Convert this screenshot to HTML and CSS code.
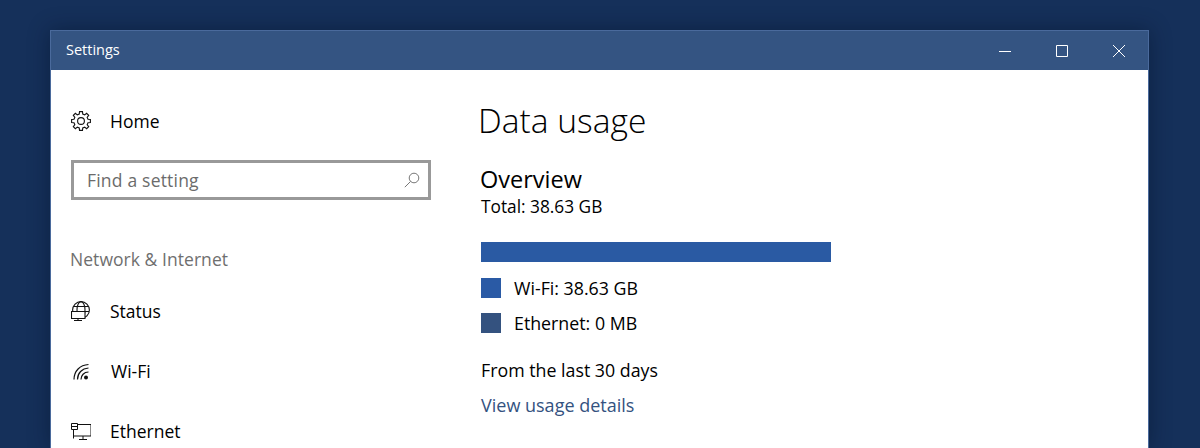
FILE: index.html
```html
<!DOCTYPE html>
<html>
<head>
<meta charset="utf-8">
<meta name="viewport" content="width=device-width, initial-scale=1.0">
<title>Settings</title>
<link rel="stylesheet" href="styles.css">
</head>
<body>
  <div class="window">
    <div class="titlebar">
      <span class="title">Settings</span>
      <div class="controls">
        <svg class="ctl ctl-min" width="14" height="14" viewBox="0 0 14 14"><path d="M1 7.500h12" stroke="#fff" fill="none"/></svg>
        <svg class="ctl ctl-max" width="14" height="14" viewBox="0 0 14 14"><path d="M1.500 1.500h11v11h-11z" stroke="#fff" fill="none"/></svg>
        <svg class="ctl ctl-close" width="14" height="14" viewBox="0 0 14 14"><path d="M1 1l12 12M13 1L1 13" stroke="#fff" fill="none"/></svg>
      </div>
    </div>

    <div class="content">
      <div class="sidebar">
        <div class="nav-row home">
          <svg class="nav-icon" width="20" height="20" viewBox="0 0 20 20"><polygon points="8.26,3.01 8.51,.62 11.49,.62 11.74,3.01 13.71,3.83 15.59,2.31 17.69,4.41 16.17,6.29 16.99,8.26 19.38,8.51 19.38,11.49 16.99,11.74 16.17,13.71 17.69,15.59 15.59,17.69 13.71,16.17 11.74,16.99 11.49,19.38 8.51,19.38 8.26,16.99 6.29,16.17 4.41,17.69 2.31,15.59 3.83,13.71 3.01,11.74 .62,11.49 .62,8.51 3.01,8.26 3.83,6.29 2.31,4.41 4.41,2.31 6.29,3.83" fill="none" stroke="#111" stroke-width="1.100"/><circle cx="10" cy="10" r="3.400" fill="none" stroke="#111" stroke-width="1.100"/></svg>
          <span>Home</span>
        </div>
        <div class="search">
          <span class="search-text">Find a setting</span>
          <svg width="16" height="16" viewBox="0 0 16 16"><circle cx="10" cy="6" r="4.800" fill="none" stroke="#777"/><path d="M6.600 9.400L.8 15.200" stroke="#777" fill="none"/></svg>
        </div>
        <div class="nav-heading">Network &amp; Internet</div>
        <div class="nav-row">
          <svg class="nav-icon" width="20" height="20" viewBox="0 0 20 20"><g fill="none" stroke="#111" stroke-width="1.100"><circle cx="10" cy="9" r="8.400"/><ellipse cx="10" cy="9" rx="4" ry="8.400"/><path d="M2.500 5.500h15M14 10.500h4"/><path d="M.5 10.500h13.500v7H.5z" fill="#fff"/><path d="M7 17.500v2.500M3 19.500h8"/></g></svg>
          <span>Status</span>
        </div>
        <div class="nav-row">
          <svg class="nav-icon" width="20" height="20" viewBox="0 0 20 20"><g fill="none" stroke="#111" stroke-width="1.200"><path d="M3 18.500C3 10 9 4 17.500 3.500"/><path d="M6.500 18.500C6.500 12 11 7.500 17.500 7"/><path d="M10 18.500c0-4 3-7.500 7.500-7.500"/></g><circle cx="15" cy="16.500" r="2" fill="#111"/></svg>
          <span class="wifi-label">Wi-Fi</span>
        </div>
        <div class="nav-row">
          <svg class="nav-icon" width="20" height="20" viewBox="0 0 20 20"><g fill="none" stroke="#111"><path d="M6 3.500h14v11.500H2.500"/><path d="M.5 2.500h6v6h-6z"/><path d="M2.500 8.500v9M12 15v3.500M8 18.500h8"/><path d="M1 5.500h5"/></g></svg>
          <span>Ethernet</span>
        </div>
      </div>

      <div class="main">
        <h1>Data usage</h1>
        <h2>Overview</h2>
        <div class="total">Total: 38.63 GB</div>
        <div class="bar"></div>
        <div class="legend">
          <div class="legend-row"><span class="swatch swatch-wifi"></span>Wi-Fi: 38.63 GB</div>
          <div class="legend-row"><span class="swatch swatch-eth"></span>Ethernet: 0 MB</div>
        </div>
        <div class="period">From the last 30 days</div>
        <a class="details" href="#">View usage details</a>
      </div>
    </div>
  </div>
</body>
</html>
```

FILE: styles.css
```css
html, body {
  height: 100%;
  margin: 0;
  padding: 0;
  overflow: hidden;
}

body {
  background: #15305a;
  font-family: "Open Sans", "Noto Sans", sans-serif;
  color: #000;
}

.window {
  width: 1097px;
  height: 417px;
  margin: 30px 0 0 50px;
  border: 1px solid #4a6a9c;
  border-bottom: none;
  background: #fff;
  box-shadow: 0 0 20px rgba(5, 15, 35, 0.45);
  overflow: hidden;
}

.titlebar {
  display: flex;
  align-items: center;
  justify-content: space-between;
  height: 39px;
  background: #345482;
  color: #fff;
}

.title {
  margin: 0 0 2px 15px;
  font-size: 14.500px;
}

.controls {
  display: flex;
  align-items: center;
}

.ctl {
  display: block;
}

.ctl-min {
  margin-right: 43px;
}

.ctl-max {
  margin-right: 43px;
}

.ctl-close {
  margin-right: 22px;
}

.content {
  display: flex;
}

.sidebar {
  width: 360px;
  padding: 31px 0 0 20px;
  font-size: 17.500px;
}

.nav-row {
  display: flex;
  align-items: center;
  height: 60px;
}

.nav-row.home {
  height: 40px;
}

.nav-icon {
  flex: none;
  margin-right: 19px;
}

.wifi-label {
  margin-left: 1px;
}

.search {
  display: flex;
  align-items: center;
  justify-content: space-between;
  box-sizing: border-box;
  height: 40px;
  margin-top: 19px;
  padding: 0 8px 0 13px;
  border: 3px solid #999;
  color: #6b6b6b;
}

.search-text {
  letter-spacing: 0.2px;
}

.nav-heading {
  height: 37px;
  margin: 44px 0 0 -1px;
  letter-spacing: 0.05px;
  line-height: 30px;
  color: #6f6f6f;
}

.main {
  margin-left: 50px;
  padding-top: 30px;
}

h1 {
  margin: 0 0 0 -3px;
  font-size: 33.600px;
  font-weight: 300;
  line-height: 40px;
}

h2 {
  margin: 22px 0 0 -1px;
  font-size: 23.500px;
  font-weight: 400;
  line-height: 34px;
}

.total {
  font-size: 17.300px;
  line-height: 22px;
}

.bar {
  width: 350px;
  height: 20px;
  margin-top: 24px;
  background: #2a5aa3;
}

.legend {
  display: flex;
  flex-direction: column;
  gap: 15px;
  margin-top: 16px;
}

.legend-row {
  display: flex;
  align-items: center;
  height: 20px;
  font-size: 17.800px;
}

.swatch {
  width: 20px;
  height: 20px;
  margin-right: 13px;
}

.swatch-wifi {
  background: #2a5aa5;
}

.swatch-eth {
  background: #34527f;
}

.period {
  margin-top: 26px;
  font-size: 17.800px;
  line-height: 22px;
}

.details {
  display: block;
  margin-top: 13px;
  color: #34527f;
  font-size: 18px;
  line-height: 22px;
  text-decoration: none;
}
```
